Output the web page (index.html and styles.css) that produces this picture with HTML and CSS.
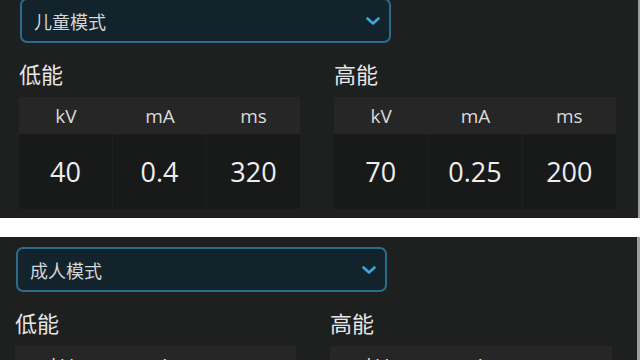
FILE: index.html
```html
<!DOCTYPE html>
<html lang="zh-CN">
<head>
  <meta charset="UTF-8" />
  <meta name="viewport" content="width=device-width, initial-scale=1.0" />
  <title>曝光参数</title>
  <link rel="stylesheet" href="styles.css">
</head>
<body>
  <!-- 儿童模式 -->
  <div class="shot shot-top">
    <div class="screen">
      <div class="mode-select">
        <span>儿童模式</span>
        <svg class="chevron" width="14" height="8" viewBox="0 0 14 8"><path d="M1.5 1.5 L7 6.5 L12.5 1.5" fill="none" stroke="#3aa9da" stroke-width="2.6" stroke-linecap="round" stroke-linejoin="round"/></svg>
      </div>
      <div class="groups">
        <div class="group">
          <div class="group-title">低能</div>
          <div class="params">
            <div class="head">kV</div><div class="head">mA</div><div class="head">ms</div>
            <div class="val">40</div><div class="val">0.4</div><div class="val">320</div>
          </div>
        </div>
        <div class="group">
          <div class="group-title">高能</div>
          <div class="params">
            <div class="head">kV</div><div class="head">mA</div><div class="head">ms</div>
            <div class="val">70</div><div class="val">0.25</div><div class="val">200</div>
          </div>
        </div>
      </div>
    </div>
  </div>

  <div class="gap"></div>

  <!-- 成人模式 -->
  <div class="shot shot-bottom">
    <div class="screen">
      <div class="mode-select">
        <span>成人模式</span>
        <svg class="chevron" width="14" height="8" viewBox="0 0 14 8"><path d="M1.5 1.5 L7 6.5 L12.5 1.5" fill="none" stroke="#3aa9da" stroke-width="2.6" stroke-linecap="round" stroke-linejoin="round"/></svg>
      </div>
      <div class="groups">
        <div class="group">
          <div class="group-title">低能</div>
          <div class="params">
            <div class="head">kV</div><div class="head">mA</div><div class="head">ms</div>
            <div class="val">40</div><div class="val">0.4</div><div class="val">320</div>
          </div>
        </div>
        <div class="group">
          <div class="group-title">高能</div>
          <div class="params">
            <div class="head">kV</div><div class="head">mA</div><div class="head">ms</div>
            <div class="val">70</div><div class="val">0.25</div><div class="val">200</div>
          </div>
        </div>
      </div>
    </div>
  </div>
</body>
</html>
```

FILE: styles.css
```css
body {
  margin: 0;
  background: #fff;
  font-family: "Open Sans", "Noto Sans CJK SC", sans-serif;
  color: #dcdcdc;
}
.shot {
  background: #1e1f1f;
  border-right: 2px solid #9e9e9e;
  overflow: hidden;
}
.shot-top {
  height: 218px;
}
.shot-bottom {
  height: 123px;
  border-right-width: 3px;
}
.gap {
  height: 19px;
}
.screen {
  padding-left: 19px;
}
.shot-top .screen {
  margin-top: -2px;
}
.shot-bottom .screen {
  padding-top: 10px;
  padding-left: 15px;
}

/* 模式下拉框 */
.mode-select {
  box-sizing: border-box;
  width: 371px;
  height: 45px;
  margin-left: 1px;
  display: flex;
  align-items: center;
  justify-content: space-between;
  padding: 0 9px 0 12px;
  background: #12232b;
  border: 2px solid #2c6c8a;
  border-radius: 7px;
  font-family: "Noto Sans CJK SC", sans-serif;
  font-size: 18px;
  color: #d6d6d6;
}
.chevron {
  display: block;
}

/* 低能 / 高能 */
.groups {
  display: grid;
  grid-template-columns: 281px 282px;
  column-gap: 34px;
  margin-top: 16px;
}
.group-title {
  font-family: "Noto Sans CJK SC", sans-serif;
  font-size: 22px;
  line-height: 28px;
  color: #e6e6e6;
  margin-bottom: 10px;
}
.params {
  display: grid;
  grid-template-columns: repeat(3, 1fr);
  grid-template-rows: 37px 75px;
  column-gap: 1px;
  background: #1f2020;
}
.params .head {
  background: #262626;
  display: flex;
  align-items: center;
  justify-content: center;
  font-size: 19px;
  color: #dadada;
}
.params .head:nth-child(1) {
  margin-right: -1px;
}
.params .head:nth-child(2) {
  margin-right: -1px;
}
.params .val {
  background: #181919;
  display: flex;
  align-items: center;
  justify-content: center;
  font-size: 27px;
  color: #eeeeee;
}
```
